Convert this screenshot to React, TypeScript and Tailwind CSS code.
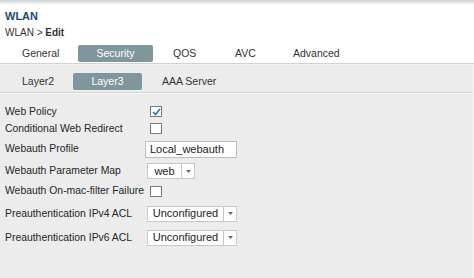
import React from "react";

const font = { fontFamily: '"Liberation Sans", Arial, sans-serif' };

function Check({ checked }: { checked?: boolean }) {
  return (
    <div className="w-[12px] h-[11px] border border-[#7a7a7a] bg-white flex items-center justify-center">
      {checked && (
        <svg width="9" height="8" viewBox="0 0 9 8">
          <path d="M1 4 L3.5 6.5 L8 1" stroke="#2a6fa8" strokeWidth="1.6" fill="none" />
        </svg>
      )}
    </div>
  );
}

function Select({ value, w }: { value: string; w: string }) {
  return (
    <div className={`flex h-[16px] border border-[#c8c8c8] bg-white ${w}`}>
      <div className="flex-1 flex items-center justify-center text-[11px] text-[#222] leading-none">{value}</div>
      <div className="w-[13px] border-l border-[#c8c8c8] flex items-center justify-center">
        <svg width="5" height="3" viewBox="0 0 5 3">
          <path d="M0 0 L5 0 L2.5 3 Z" fill="#666" />
        </svg>
      </div>
    </div>
  );
}

function Row({ label, h, children }: { label: string; h: string; children: React.ReactNode }) {
  return (
    <div className={`flex items-center ${h}`}>
      <div className="w-[145px] pl-[5px] text-[10.4px] text-[#262626] whitespace-nowrap">{label}</div>
      {children}
    </div>
  );
}

export default function App() {
  return (
    <div className="w-[474px] h-[278px] bg-white overflow-hidden relative" style={font}>
      <div className="h-[5px] bg-gradient-to-b from-[#cfcfcf] to-white" />
      <div className="pl-[5px] pt-[6px] h-[16px] text-[11px] font-bold text-[#1d4a6b] leading-[11px]">WLAN</div>
      <div className="pl-[5px] pt-[7px] text-[10px] text-[#333] leading-[10px]">
        WLAN &gt; <span className="font-bold">Edit</span>
      </div>
      <div className="flex items-center h-[17px] mt-[7px] text-[10.5px] text-[#333]">
        <div className="w-[78px] pl-[22px]">General</div>
        <div className="w-[75px] h-[17px] bg-[#7f969d] text-white rounded-[2px] flex items-center justify-center">Security</div>
        <div className="pl-[20px] w-[82px]">QOS</div>
        <div className="w-[58px]">AVC</div>
        <div>Advanced</div>
      </div>
      <div className="mt-[1px] h-[1px] bg-[#d2d2d2]" />
      <div className="bg-[#ececec] h-[214px] border-r border-[#f4f4f4]">
        <div className="h-[1px] bg-[#f6f6f6]" />
        <div className="flex items-center h-[17px] mt-[8px] text-[10.5px] text-[#333]">
          <div className="w-[73px] pl-[22px]">Layer2</div>
          <div className="w-[69px] h-[17px] bg-[#7f969d] text-white rounded-[2px] flex items-center justify-center">Layer3</div>
          <div className="pl-[20px]">AAA Server</div>
        </div>
        <div className="mt-[2px] h-[1px] bg-[#d6d6d6]" />
        <div className="h-[1px] bg-[#f5f5f5]" />
        <div className="pt-[9px]">
          <Row label="Web Policy" h="h-[17px]">
            <div className="ml-[5px]"><Check checked /></div>
          </Row>
          <Row label="Conditional Web Redirect" h="h-[17px]">
            <div className="ml-[5px]"><Check /></div>
          </Row>
          <Row label="Webauth Profile" h="h-[24px]">
            <div className="w-[92px] h-[17px] border border-[#bdbdbd] bg-white flex items-center pl-[4px] text-[11px] text-[#222] leading-none">Local_webauth</div>
          </Row>
          <Row label="Webauth Parameter Map" h="h-[20px]">
            <div className="ml-[2px]"><Select value="web" w="w-[48px]" /></div>
          </Row>
          <Row label="Webauth On-mac-filter Failure" h="h-[20px]">
            <div className="ml-[5px]"><Check /></div>
          </Row>
          <Row label="Preauthentication IPv4 ACL" h="h-[25px]">
            <div className="ml-[2px]"><Select value="Unconfigured" w="w-[90px]" /></div>
          </Row>
          <Row label="Preauthentication IPv6 ACL" h="h-[23px]">
            <div className="ml-[2px]"><Select value="Unconfigured" w="w-[90px]" /></div>
          </Row>
        </div>
      </div>
    </div>
  );
}
